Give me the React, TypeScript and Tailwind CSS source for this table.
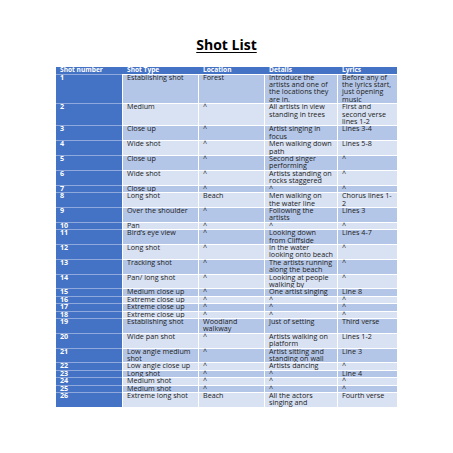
type Cell = string | string[]

interface Shot {
    type: Cell
    location: Cell
    details: Cell
    lyrics: Cell
}

const SHOTS: Shot[] = [
    { type: "Establishing shot", location: "Forest", details: ["Introduce the", "artists and one of", "the locations they", "are in."], lyrics: ["Before any of", "the lyrics start,", "just opening", "music"] },
    { type: "Medium", location: "^", details: ["All artists in view", "standing in trees"], lyrics: ["First and", "second verse", "lines 1-2"] },
    { type: "Close up", location: "^", details: ["Artist singing in", "focus"], lyrics: "Lines 3-4" },
    { type: "Wide shot", location: "^", details: ["Men walking down", "path"], lyrics: "Lines 5-8" },
    { type: "Close up", location: "^", details: ["Second singer", "performing"], lyrics: "^" },
    { type: "Wide shot", location: "^", details: ["Artists standing on", "rocks staggered"], lyrics: "^" },
    { type: "Close up", location: "^", details: "^", lyrics: "^" },
    { type: "Long shot", location: "Beach", details: ["Men walking on", "the water line"], lyrics: ["Chorus lines 1-", "2"] },
    { type: "Over the shoulder", location: "^", details: ["Following the", "artists"], lyrics: "Lines 3" },
    { type: "Pan", location: "^", details: "^", lyrics: "^" },
    { type: "Bird\u2019s eye view", location: "^", details: ["Looking down", "from Cliffside"], lyrics: "Lines 4-7" },
    { type: "Long shot", location: "^", details: ["In the water", "looking onto beach"], lyrics: "^" },
    { type: "Tracking shot", location: "^", details: ["The artists running", "along the beach"], lyrics: "^" },
    { type: "Pan/ long shot", location: "^", details: ["Looking at people", "walking by"], lyrics: "^" },
    { type: "Medium close up", location: "^", details: "One artist singing", lyrics: "Line 8" },
    { type: "Extreme close up", location: "^", details: "^", lyrics: "^" },
    { type: "Extreme close up", location: "^", details: "^", lyrics: "^" },
    { type: "Extreme close up", location: "^", details: "^", lyrics: "^" },
    { type: "Establishing shot", location: ["Woodland", "walkway"], details: "Just of setting", lyrics: "Third verse" },
    { type: "Wide pan shot", location: "^", details: ["Artists walking on", "platform"], lyrics: "Lines 1-2" },
    { type: ["Low angle medium", "shot"], location: "^", details: ["Artist sitting and", "standing on wall"], lyrics: "Line 3" },
    { type: "Low angle close up", location: "^", details: "Artists dancing", lyrics: "^" },
    { type: "Long shot", location: "^", details: "^", lyrics: "Line 4" },
    { type: "Medium shot", location: "^", details: "^", lyrics: "^" },
    { type: "Medium shot", location: "^", details: "^", lyrics: "^" },
    { type: "Extreme long shot", location: "Beach", details: ["All the actors", "singing and"], lyrics: "Fourth verse" },
]

const HEADERS = ["Shot number", "Shot Type", "Location", "Details", "Lyrics"]

const Lines = ({ value }: { value: Cell }) => {
    const lines = Array.isArray(value) ? value : [value]
    return <>{lines.map((l, i) => <div key={i}>{l}</div>)}</>
}

const ShotRow = ({ shot, index }: { shot: Shot, index: number }) => {
    const shade = index % 2 === 0 ? "bg-[#b4c6e7]" : "bg-[#d9e2f3]"
    const cell = `${shade} pl-[5px] pr-[2px] text-[#1c1c1c] shadow-[inset_1px_1px_0_#ffffff]`
    return <>
        <div className="bg-[#4472c4] pl-[4px] font-bold text-white shadow-[inset_0_1px_0_#8fa9dc]">{index + 1}</div>
        <div className={cell}><Lines value={shot.type} /></div>
        <div className={cell}><Lines value={shot.location} /></div>
        <div className={cell}><Lines value={shot.details} /></div>
        <div className={cell}><Lines value={shot.lyrics} /></div>
    </>
}

export default function App() {
    return <div className="min-h-[453px] bg-white flex flex-col items-center font-['Open_Sans','Lato',sans-serif]">
        <h1 className="mt-[36px] h-[18px] text-[14px] leading-[18px] font-bold text-black underline underline-offset-2">Shot List</h1>
        <div className="mt-[13px] grid grid-cols-[66px_76px_66px_73px_60px] w-[341px] whitespace-nowrap text-[7.2px] leading-[7.4px]">
            {HEADERS.map((h, i) => (
                <div key={h} className={`bg-[#4472c4] h-[6.6px] text-[6.6px] leading-[6.6px] font-bold text-white ${i === 0 ? "pl-[4px]" : "pl-[5px]"}`}>{h}</div>
            ))}
            {SHOTS.map((shot, i) => (
                <ShotRow key={`shot-${i}`} shot={shot} index={i} />
            ))}
        </div>
    </div>
}
